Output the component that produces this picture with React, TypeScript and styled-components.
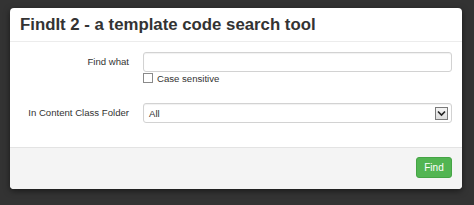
import React from "react";
import styled, { createGlobalStyle } from "styled-components";

const GlobalStyle = createGlobalStyle`
  html, body {
    margin: 0;
    padding: 0;
    background: #333333;
  }
  body {
    font-family: "Liberation Sans", Arial, sans-serif;
    color: #333;
  }
`;

const Backdrop = styled.div`
  width: 474px;
  height: 205px;
  padding: 8px 12px 0 10px;
  box-sizing: border-box;
  background: #333333;
`;

const Modal = styled.div`
  width: 452px;
  background: #fff;
  border-radius: 4px;
  box-shadow: 0 2px 6px rgba(0, 0, 0, 0.5);
  overflow: hidden;
`;

const Header = styled.div`
  height: 33px;
  padding: 0 10px;
  display: flex;
  align-items: center;
  border-bottom: 1px solid #ececec;
`;

const Title = styled.h4`
  margin: 0;
  font-size: 16.8px;
  font-weight: bold;
  color: #333;
`;

const Body = styled.div`
  padding: 10px 10px 24px;
  display: flex;
  flex-direction: column;
  gap: 20px;
`;

const Row = styled.div`
  display: grid;
  grid-template-columns: 109px 1fr;
  column-gap: 14px;
`;

const Label = styled.label`
  font-size: 9.6px;
  color: #333;
  text-align: right;
  height: 20px;
  line-height: 20px;
`;

const Field = styled.div`
  display: flex;
  flex-direction: column;
`;

const TextInput = styled.input`
  box-sizing: border-box;
  height: 20px;
  width: 100%;
  border: 1px solid #d2d2d2;
  border-radius: 3px;
  box-shadow: inset 0 1px 1px rgba(0, 0, 0, 0.06);
  padding: 0 5px;
  font-family: inherit;
  font-size: 9.6px;
  outline: none;
`;

const CheckRow = styled.label`
  display: flex;
  align-items: center;
  gap: 4px;
  margin-top: 1px;
  height: 10px;
  font-size: 9.6px;
  color: #333;
`;

const Box = styled.span`
  box-sizing: border-box;
  width: 10px;
  height: 10px;
  border: 1px solid #8a8a8a;
  background: #fff;
`;

const Select = styled.div`
  box-sizing: border-box;
  height: 20px;
  border: 1px solid #d2d2d2;
  border-radius: 3px;
  box-shadow: inset 0 1px 1px rgba(0, 0, 0, 0.06);
  padding: 0 3px 0 5px;
  display: flex;
  align-items: center;
  justify-content: space-between;
  font-size: 9.6px;
  color: #333;
`;

const ArrowBox = styled.span`
  box-sizing: border-box;
  width: 13px;
  height: 13px;
  border: 1px solid #7a7a7a;
  background: linear-gradient(#f4f4f4, #dcdcdc);
  display: flex;
  align-items: center;
  justify-content: center;
`;

const Footer = styled.div`
  border-top: 1px solid #e3e3e3;
  background: #f4f4f4;
  padding: 9px 10px 11px;
  display: flex;
  justify-content: flex-end;
`;

const Button = styled.button`
  height: 21px;
  width: 36px;
  padding: 0;
  border: 1px solid #45a445;
  border-radius: 3px;
  background: #52b552;
  color: #fff;
  font-family: inherit;
  font-size: 10px;
`;

export default function App() {
  return (
    <>
      <GlobalStyle />
      <Backdrop>
        <Modal>
          <Header>
            <Title>FindIt 2 - a template code search tool</Title>
          </Header>
          <Body>
            <Row>
              <Label>Find what</Label>
              <Field>
                <TextInput type="text" />
                <CheckRow>
                  <Box />
                  Case sensitive
                </CheckRow>
              </Field>
            </Row>
            <Row>
              <Label>In Content Class Folder</Label>
              <Select>
                <span>All</span>
                <ArrowBox>
                  <svg width="9" height="7" viewBox="0 0 9 7">
                    <path d="M1 1.5 L4.5 5 L8 1.5" fill="none" stroke="#222" strokeWidth="1.6" />
                  </svg>
                </ArrowBox>
              </Select>
            </Row>
          </Body>
          <Footer>
            <Button>Find</Button>
          </Footer>
        </Modal>
      </Backdrop>
    </>
  );
}
